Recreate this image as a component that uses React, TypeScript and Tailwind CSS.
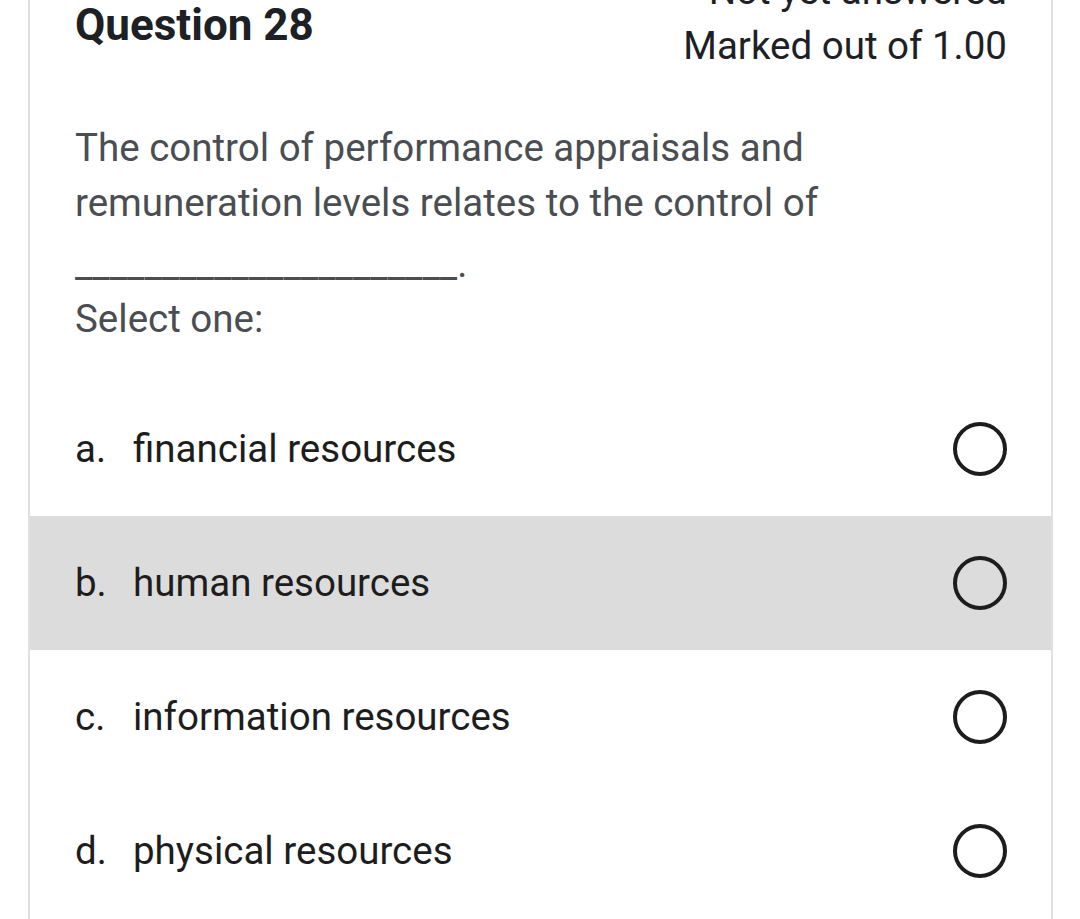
const options = [
  { letter: 'a.', label: 'financial resources' },
  { letter: 'b.', label: 'human resources', hover: true },
  { letter: 'c.', label: 'information resources' },
  { letter: 'd.', label: 'physical resources' },
]

function Radio() {
  return <div className="w-[54px] h-[54px] rounded-full border-[4.5px] border-[#1d1d1d] bg-transparent shrink-0" />
}

export default function App() {
  return (
    <div className="min-h-screen bg-white font-['Roboto',sans-serif] overflow-hidden">
      <div className="ml-[28px] w-[1025px] min-h-[919px] border-x-2 border-[#e0e0e0]">
        <div className="flex justify-between pl-[45px] pr-[44px]">
          <h2 className="text-[44px] leading-[50px] font-bold text-[#1d2125]">Question 28</h2>
          <div className="text-right text-[38.5px] leading-[55px] text-[#1d2125] -mt-[37px]">
            <div>Not yet answered</div>
            <div>Marked out of 1.00</div>
          </div>
        </div>

        <div className="pl-[45px] pr-[44px] mt-[47px] text-[38.5px] leading-[55px] text-[#4a4e53]">
          <p>
            The control of performance appraisals and
            <br />
            remuneration levels relates to the control of
          </p>
          <p className="mt-[6px]">______________________.</p>
          <p>Select one:</p>
        </div>

        <div className="mt-[36px]">
          {options.map((o) => (
            <div
              key={o.letter}
              className={`flex items-center justify-between h-[134px] pl-[45px] pr-[44px] ${o.hover ? 'bg-[#dcdcdc]' : ''}`}
            >
              <div className="flex text-[38.5px] text-[#1d1d1d]">
                <span className="w-[58px]">{o.letter}</span>
                <span>{o.label}</span>
              </div>
              <Radio />
            </div>
          ))}
        </div>
      </div>
    </div>
  )
}
